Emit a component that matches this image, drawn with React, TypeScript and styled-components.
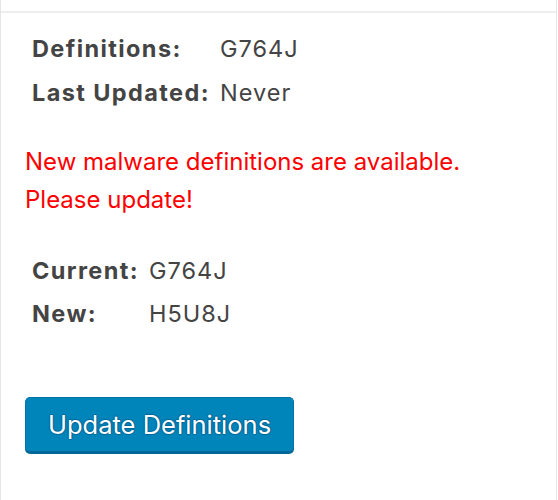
import React from "react";
import styled, { createGlobalStyle } from "styled-components";

const Global = createGlobalStyle`
  html, body { margin: 0; padding: 0; background: #fff; }
  body { font-family: Inter, "Noto Sans", sans-serif; color: #444; }
`;

const Panel = styled.div`
  box-sizing: border-box;
  width: 557px;
  min-height: 500px;
  border-left: 1px solid #e5e5e5;
  border-right: 1px solid #e5e5e5;
  background: #fff;
`;

const Header = styled.div`
  height: 11px;
  border-bottom: 2px solid #eeeeee;
`;

const Body = styled.div`
  padding: 14px 0 0 24px;
  display: flex;
  flex-direction: column;
  align-items: flex-start;
`;

const InfoTable = styled.div<{ $row: number }>`
  display: grid;
  grid-template-columns: auto auto;
  column-gap: 10px;
  padding-left: 7px;
  font-size: 23.5px;
  line-height: ${(p) => p.$row}px;
`;

const Label = styled.div`
  font-weight: 700;
  letter-spacing: 1.4px;
`;

const Value = styled.div`
  font-weight: 400;
  letter-spacing: 1px;
`;

const Notice = styled.p`
  margin: 29px 0 30px 0;
  color: #ff0000;
  font-size: 24px;
  line-height: 38px;
`;

const Button = styled.button`
  margin-top: 62px;
  box-sizing: border-box;
  height: 55px;
  padding: 0 22px;
  font-family: inherit;
  font-size: 25.5px;
  color: #fff;
  background: #0085ba;
  border: 1px solid #0073aa;
  border-bottom-color: #006799;
  border-radius: 5px;
  box-shadow: 0 2px 0 #006799;
  text-shadow: 0 -1px 1px #006799, 1px 0 1px #006799, 0 1px 1px #006799, -1px 0 1px #006799;
  cursor: pointer;
`;

export default function App() {
  return (
    <>
      <Global />
      <Panel>
        <Header />
        <Body>
          <InfoTable $row={43.5}>
            <Label>Definitions:</Label>
            <Value>G764J</Value>
            <Label>Last Updated:</Label>
            <Value>Never</Value>
          </InfoTable>
          <Notice>
            New malware definitions are available.
            <br />
            Please update!
          </Notice>
          <InfoTable $row={43}>
            <Label>Current:</Label>
            <Value>G764J</Value>
            <Label>New:</Label>
            <Value>H5U8J</Value>
          </InfoTable>
          <Button>Update Definitions</Button>
        </Body>
      </Panel>
    </>
  );
}
